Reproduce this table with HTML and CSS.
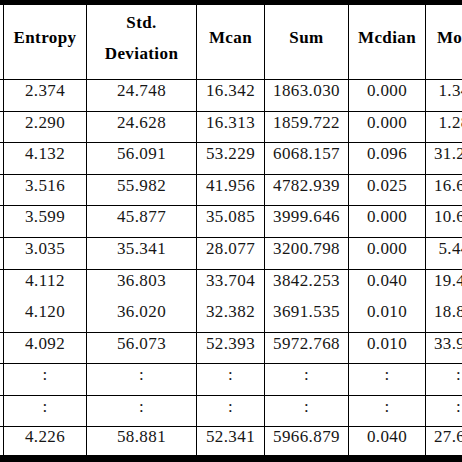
FILE: index.html
```html
<!DOCTYPE html>
<html>
<head>
<meta charset="utf-8">
<link rel="stylesheet" href="styles.css">
</head>
<body>
<div class="frame">
  <div class="sheet">
    <div class="row head">
      <div class="c"></div>
      <div class="c">Entropy</div>
      <div class="c">Std.<br>Deviation</div>
      <div class="c">Mcan</div>
      <div class="c">Sum</div>
      <div class="c">Mcdian</div>
      <div class="c">Mode</div>
    </div>
    <div class="row">
      <div class="c"></div><div class="c">2.374</div><div class="c">24.748</div><div class="c">16.342</div><div class="c">1863.030</div><div class="c">0.000</div><div class="c">1.340</div>
    </div>
    <div class="row">
      <div class="c"></div><div class="c">2.290</div><div class="c">24.628</div><div class="c">16.313</div><div class="c">1859.722</div><div class="c">0.000</div><div class="c">1.280</div>
    </div>
    <div class="row">
      <div class="c"></div><div class="c">4.132</div><div class="c">56.091</div><div class="c">53.229</div><div class="c">6068.157</div><div class="c">0.096</div><div class="c">31.260</div>
    </div>
    <div class="row">
      <div class="c"></div><div class="c">3.516</div><div class="c">55.982</div><div class="c">41.956</div><div class="c">4782.939</div><div class="c">0.025</div><div class="c">16.650</div>
    </div>
    <div class="row">
      <div class="c"></div><div class="c">3.599</div><div class="c">45.877</div><div class="c">35.085</div><div class="c">3999.646</div><div class="c">0.000</div><div class="c">10.680</div>
    </div>
    <div class="row">
      <div class="c"></div><div class="c">3.035</div><div class="c">35.341</div><div class="c">28.077</div><div class="c">3200.798</div><div class="c">0.000</div><div class="c">5.440</div>
    </div>
    <div class="row">
      <div class="c"></div><div class="c">4.112</div><div class="c">36.803</div><div class="c">33.704</div><div class="c">3842.253</div><div class="c">0.040</div><div class="c">19.480</div>
    </div>
    <div class="row open">
      <div class="c"></div><div class="c">4.120</div><div class="c">36.020</div><div class="c">32.382</div><div class="c">3691.535</div><div class="c">0.010</div><div class="c">18.850</div>
    </div>
    <div class="row">
      <div class="c"></div><div class="c">4.092</div><div class="c">56.073</div><div class="c">52.393</div><div class="c">5972.768</div><div class="c">0.010</div><div class="c">33.930</div>
    </div>
    <div class="row">
      <div class="c"></div><div class="c">:</div><div class="c">:</div><div class="c">:</div><div class="c">:</div><div class="c">:</div><div class="c">:</div>
    </div>
    <div class="row">
      <div class="c"></div><div class="c">:</div><div class="c">:</div><div class="c">:</div><div class="c">:</div><div class="c">:</div><div class="c">:</div>
    </div>
    <div class="row">
      <div class="c"></div><div class="c">4.226</div><div class="c">58.881</div><div class="c">52.341</div><div class="c">5966.879</div><div class="c">0.040</div><div class="c">27.650</div>
    </div>
  </div>
</div>
</body>
</html>
```

FILE: styles.css
```css
html, body {
  margin: 0;
  padding: 0;
  background: #ffffff;
}

.frame {
  width: 462px;
  height: 462px;
  overflow: hidden;
  background: #ffffff;
}

.sheet {
  width: 491px;
  display: grid;
  grid-template-columns: 3px 83px 110px 68px 84px 77px 66px;
  grid-template-rows: 74px 32px 31px 32px 31px 32px 32px 31px 32px 31px 32px 31px 29px;
  border-top: 5px solid #000;
  border-bottom: 12px solid #000;
  font-family: "Liberation Serif", "Times New Roman", serif;
  font-size: 17px;
  letter-spacing: 0.4px;
  color: #161616;
}

.row {
  display: contents;
}

.c {
  box-sizing: border-box;
  border-left: 1px solid #000;
  border-top: 1px solid #000;
  display: flex;
  align-items: center;
  justify-content: center;
  text-align: center;
  padding-bottom: 9px;
  line-height: 20px;
  white-space: nowrap;
}

.row .c:first-child {
  border-left: none;
}

.head .c {
  border-top: none;
  font-weight: bold;
  color: #000;
  line-height: 31px;
}

.open .c {
  border-top: none;
}
```
